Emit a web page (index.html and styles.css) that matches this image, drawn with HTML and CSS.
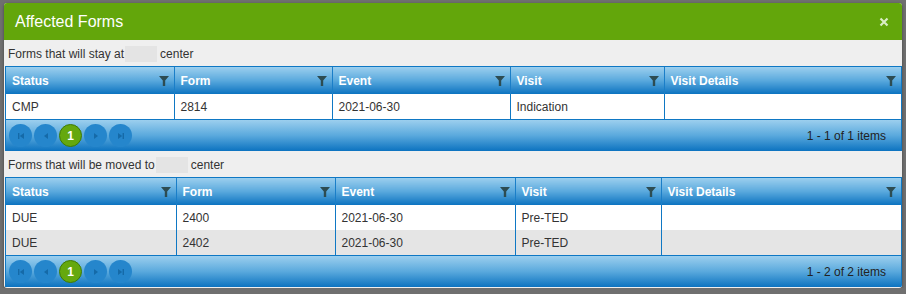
FILE: index.html
```html
<!DOCTYPE html>
<html lang="en">
<head>
    <meta charset="UTF-8">
    <title>Affected Forms</title>
    <link rel="stylesheet" href="styles.css">
</head>
<body>
    <div class="window">
        <div class="window-title">
            <span>Affected Forms</span>
            <svg class="close" viewBox="0 0 10 10"><path d="M1.5 1.5 L8.5 8.5 M8.5 1.5 L1.5 8.5"/></svg>
        </div>
        <div class="window-body">
            <div class="section-label">Forms that will stay at <span class="blank first"></span> center</div>
            <div class="grid">
                <table>
                    <colgroup>
                        <col style="width:168px"><col style="width:158px"><col style="width:178px"><col style="width:154px"><col>
                    </colgroup>
                    <thead>
                        <tr>
                            <th>Status<svg class="filter" viewBox="0 0 10 10"><polygon points="0,0 10,0 6.2,4.5 6.2,10 3.8,10 3.8,4.5"/></svg></th>
                            <th>Form<svg class="filter" viewBox="0 0 10 10"><polygon points="0,0 10,0 6.2,4.5 6.2,10 3.8,10 3.8,4.5"/></svg></th>
                            <th>Event<svg class="filter" viewBox="0 0 10 10"><polygon points="0,0 10,0 6.2,4.5 6.2,10 3.8,10 3.8,4.5"/></svg></th>
                            <th>Visit<svg class="filter" viewBox="0 0 10 10"><polygon points="0,0 10,0 6.2,4.5 6.2,10 3.8,10 3.8,4.5"/></svg></th>
                            <th>Visit Details<svg class="filter" viewBox="0 0 10 10"><polygon points="0,0 10,0 6.2,4.5 6.2,10 3.8,10 3.8,4.5"/></svg></th>
                        </tr>
                    </thead>
                    <tbody>
                        <tr>
                            <td>CMP</td>
                            <td>2814</td>
                            <td>2021-06-30</td>
                            <td>Indication</td>
                            <td></td>
                        </tr>
                    </tbody>
                </table>
                <div class="pager">
                    <div class="pager-buttons">
                        <span class="page-btn"><svg viewBox="0 0 10 10"><rect x="2" y="2" width="1.4" height="6"/><polygon points="8,2 8,8 3.8,5"/></svg></span>
                        <span class="page-btn"><svg viewBox="0 0 10 10"><polygon points="7,2 7,8 3,5"/></svg></span>
                        <span class="page-btn current">1</span>
                        <span class="page-btn"><svg viewBox="0 0 10 10"><polygon points="3,2 3,8 7,5"/></svg></span>
                        <span class="page-btn"><svg viewBox="0 0 10 10"><polygon points="2,2 2,8 6.2,5"/><rect x="6.6" y="2" width="1.4" height="6"/></svg></span>
                    </div>
                    <div class="pager-info">1 - 1 of 1 items</div>
                </div>
            </div>

            <div class="section-label">Forms that will be moved to <span class="blank second"></span> center</div>
            <div class="grid">
                <table>
                    <colgroup>
                        <col style="width:170px"><col style="width:159px"><col style="width:180px"><col style="width:146px"><col>
                    </colgroup>
                    <thead>
                        <tr>
                            <th>Status<svg class="filter" viewBox="0 0 10 10"><polygon points="0,0 10,0 6.2,4.5 6.2,10 3.8,10 3.8,4.5"/></svg></th>
                            <th>Form<svg class="filter" viewBox="0 0 10 10"><polygon points="0,0 10,0 6.2,4.5 6.2,10 3.8,10 3.8,4.5"/></svg></th>
                            <th>Event<svg class="filter" viewBox="0 0 10 10"><polygon points="0,0 10,0 6.2,4.5 6.2,10 3.8,10 3.8,4.5"/></svg></th>
                            <th>Visit<svg class="filter" viewBox="0 0 10 10"><polygon points="0,0 10,0 6.2,4.5 6.2,10 3.8,10 3.8,4.5"/></svg></th>
                            <th>Visit Details<svg class="filter" viewBox="0 0 10 10"><polygon points="0,0 10,0 6.2,4.5 6.2,10 3.8,10 3.8,4.5"/></svg></th>
                        </tr>
                    </thead>
                    <tbody>
                        <tr>
                            <td>DUE</td>
                            <td>2400</td>
                            <td>2021-06-30</td>
                            <td>Pre-TED</td>
                            <td></td>
                        </tr>
                        <tr class="alt">
                            <td>DUE</td>
                            <td>2402</td>
                            <td>2021-06-30</td>
                            <td>Pre-TED</td>
                            <td></td>
                        </tr>
                    </tbody>
                </table>
                <div class="pager">
                    <div class="pager-buttons">
                        <span class="page-btn"><svg viewBox="0 0 10 10"><rect x="2" y="2" width="1.4" height="6"/><polygon points="8,2 8,8 3.8,5"/></svg></span>
                        <span class="page-btn"><svg viewBox="0 0 10 10"><polygon points="7,2 7,8 3,5"/></svg></span>
                        <span class="page-btn current">1</span>
                        <span class="page-btn"><svg viewBox="0 0 10 10"><polygon points="3,2 3,8 7,5"/></svg></span>
                        <span class="page-btn"><svg viewBox="0 0 10 10"><polygon points="2,2 2,8 6.2,5"/><rect x="6.6" y="2" width="1.4" height="6"/></svg></span>
                    </div>
                    <div class="pager-info">1 - 2 of 2 items</div>
                </div>
            </div>
        </div>
    </div>
</body>
</html>
```

FILE: styles.css
```css
body {
    margin: 0;
    padding: 3px 4px 0 4px;
    background-color: #6f6f6f;
    font-family: "Liberation Sans", Arial, sans-serif;
    font-size: 12px;
    color: #333;
}

.window {
    width: 898px;
    background-color: #efefef;
    border-radius: 3px;
    box-shadow: 0 1px 3px rgba(0,0,0,0.4);
    overflow: hidden;
}

.window-title {
    display: flex;
    justify-content: space-between;
    align-items: center;
    height: 37px;
    padding: 0 13px 0 11px;
    background-color: #63a60b;
    color: #fff;
    font-size: 16px;
}

.window-title .close {
    width: 10px;
    height: 10px;
    stroke: #d9ecc4;
    stroke-width: 2.2;
}

.window-body {
    padding: 0 0 1px 1px;
}

.section-label {
    display: flex;
    align-items: center;
    height: 24px;
    padding: 2px 0 0 3px;
    font-size: 12px;
    color: #333;
}

.blank {
    display: inline-block;
    height: 16px;
    background-color: #e4e4e4;
    margin: 0 3px 0 1px;
}

.blank.first {
    width: 32px;
}

.blank.second {
    width: 32px;
}

.grid {
    border: 1px solid #0f78c4;
    border-bottom: none;
    background-color: #fff;
}

table {
    width: 100%;
    border-collapse: collapse;
    table-layout: fixed;
}

th {
    position: relative;
    height: 27px;
    padding: 0 6px;
    text-align: left;
    font-weight: bold;
    color: #fff;
    background: linear-gradient(#9ccfee, #5aa9dd 50%, #0c73c0);
    border-left: 1px solid #1a7ec8;
    white-space: nowrap;
}

th:first-child,
td:first-child {
    border-left: none;
}

.filter {
    position: absolute;
    right: 5px;
    top: 9px;
    width: 10px;
    height: 10px;
    fill: #2d4c52;
}

td {
    height: 25px;
    padding: 0 6px;
    border-left: 1px solid #0f78c4;
    color: #333;
}

tbody tr.alt td {
    background-color: #e5e5e5;
}

.pager {
    display: flex;
    justify-content: space-between;
    align-items: center;
    height: 31px;
    padding: 0 15px 0 3px;
    border-top: 1px solid #0f78c4;
    background: linear-gradient(#9ccfee, #5aa9dd 50%, #0c73c0);
}

.pager-buttons {
    display: flex;
    gap: 2px;
}

.page-btn {
    display: flex;
    align-items: center;
    justify-content: center;
    width: 23px;
    height: 23px;
    border-radius: 50%;
    background-color: #2586cc;
}

.page-btn svg {
    width: 10px;
    height: 10px;
    fill: #156aa8;
}

.page-btn.current {
    width: 21px;
    height: 21px;
    border: 1px solid #3e7a06;
    background-color: #65a80e;
    color: #fff;
    font-weight: bold;
    font-size: 12px;
}

.pager-info {
    color: #222;
}
```
